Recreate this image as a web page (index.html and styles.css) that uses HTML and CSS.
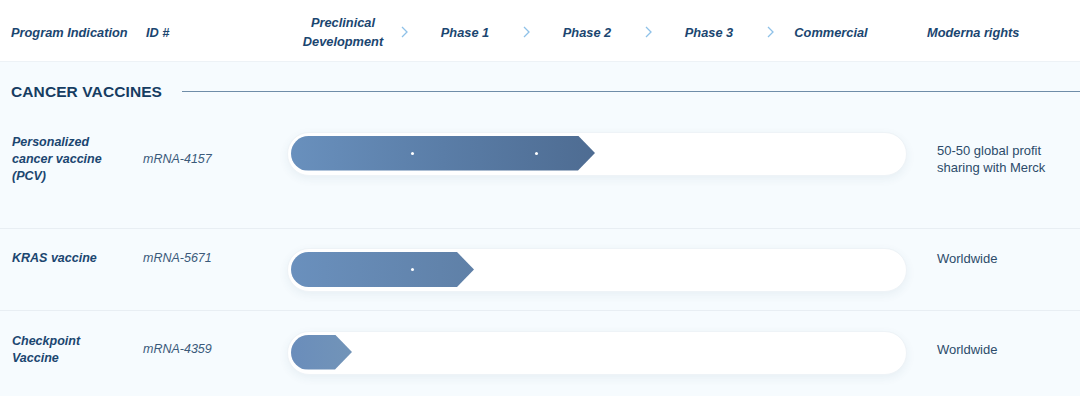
FILE: index.html
```html
<!DOCTYPE html>
<html lang="en">
<head>
<meta charset="utf-8">
<title>Pipeline</title>
<link rel="stylesheet" href="styles.css">
</head>
<body>
<div class="pipeline">
  <div class="head">
    <div class="h-name">Program Indication</div>
    <div class="h-id">ID #</div>
    <div class="h-stages">
      <div class="stage">Preclinical<br>Development</div>
      <div class="chev"><svg width="7" height="12" viewBox="0 0 7 12"><polyline points="1,1 6,6 1,11" fill="none" stroke="#8ec1e8" stroke-width="1.3"/></svg></div>
      <div class="stage">Phase 1</div>
      <div class="chev"><svg width="7" height="12" viewBox="0 0 7 12"><polyline points="1,1 6,6 1,11" fill="none" stroke="#8ec1e8" stroke-width="1.3"/></svg></div>
      <div class="stage">Phase 2</div>
      <div class="chev"><svg width="7" height="12" viewBox="0 0 7 12"><polyline points="1,1 6,6 1,11" fill="none" stroke="#8ec1e8" stroke-width="1.3"/></svg></div>
      <div class="stage">Phase 3</div>
      <div class="chev"><svg width="7" height="12" viewBox="0 0 7 12"><polyline points="1,1 6,6 1,11" fill="none" stroke="#8ec1e8" stroke-width="1.3"/></svg></div>
      <div class="stage">Commercial</div>
    </div>
    <div class="h-rights">Moderna rights</div>
  </div>

  <div class="body">
    <div class="section">
      <h2 class="section-title">CANCER VACCINES</h2>
      <div class="section-line"></div>
    </div>

    <div class="row">
      <div class="name">Personalized<br>cancer vaccine<br>(PCV)</div>
      <div class="id">mRNA-4157</div>
      <div class="track">
        <div class="bar bar-dark" style="width:304px">
          <span class="dot"></span><span class="dot"></span>
        </div>
      </div>
      <div class="rights">50-50 global profit<br>sharing with Merck</div>
    </div>

    <div class="row">
      <div class="name">KRAS vaccine</div>
      <div class="id">mRNA-5671</div>
      <div class="track">
        <div class="bar bar-mid" style="width:183px">
          <span class="dot"></span>
        </div>
      </div>
      <div class="rights">Worldwide</div>
    </div>

    <div class="row">
      <div class="name">Checkpoint<br>Vaccine</div>
      <div class="id">mRNA-4359</div>
      <div class="track">
        <div class="bar bar-light" style="width:61px"></div>
      </div>
      <div class="rights">Worldwide</div>
    </div>
  </div>
</div>
</body>
</html>
```

FILE: styles.css
```css
html, body {
  margin: 0;
  padding: 0;
}
body {
  width: 1080px;
  height: 396px;
  overflow: hidden;
  background: #f6fbfe;
  font-family: "Liberation Sans", Arial, sans-serif;
  color: #1b4670;
}
.pipeline {
  width: 1080px;
}
.head {
  box-sizing: border-box;
  display: flex;
  align-items: center;
  height: 62px;
  padding-top: 3px;
  background: #ffffff;
  border-bottom: 1px solid #edf2f6;
  padding-left: 11px;
  font-size: 12.8px;
  font-weight: bold;
  font-style: italic;
  line-height: 19px;
  color: #1b4670;
}
.h-name {
  width: 135px;
}
.h-id {
  width: 141px;
}
.h-stages {
  display: flex;
  align-items: center;
  width: 600px;
}
.stage {
  width: 112px;
  text-align: center;
}
.chev {
  width: 10px;
  display: flex;
  justify-content: center;
  align-items: center;
  height: 12px;
}
.chev svg {
  display: block;
}
.h-rights {
  margin-left: 40px;
}
.body {
  padding-top: 20px;
}
.section {
  display: flex;
  align-items: center;
  padding-left: 11px;
  height: 20px;
  margin-bottom: 10px;
}
.section-title {
  margin: 0;
  font-size: 15.5px;
  line-height: 20px;
  font-weight: bold;
  color: #163d62;
  letter-spacing: 0.1px;
}
.section-line {
  flex: 1;
  height: 1px;
  background: #6f8da8;
  margin-left: 20px;
  margin-top: -1px;
}
.row {
  display: flex;
  align-items: center;
  padding: 21.5px 0 43px 12px;
  border-bottom: 1px solid #e8eef3;
}
.name {
  width: 131px;
  font-size: 12.5px;
  line-height: 17px;
  font-weight: bold;
  font-style: italic;
  color: #1b4670;
}
.id {
  width: 145px;
  font-size: 12.5px;
  line-height: 17px;
  font-style: italic;
  color: #3a5a7a;
}
.track {
  align-self: flex-start;
  box-sizing: border-box;
  width: 620px;
  height: 44px;
  margin-left: -1px;
  margin-top: -2px;
  margin-bottom: -25px;
  padding: 3px 3px;
  background: #ffffff;
  border-radius: 22px;
  border: 1px solid #eef3f7;
  box-shadow: 0 3px 10px rgba(40, 80, 120, 0.07);
}
.bar {
  box-sizing: border-box;
  height: 35px;
  border-radius: 17.5px 0 0 17.5px;
  clip-path: polygon(0 0, calc(100% - 17px) 0, 100% 50%, calc(100% - 17px) 100%, 0 100%);
  display: flex;
  align-items: center;
  gap: 121px;
}
.bar-dark {
  background: linear-gradient(90deg, #6990bd 0%, #5a7da7 50%, #4e6c92 100%);
}
.bar-mid {
  background: linear-gradient(90deg, #6a90bd 0%, #5f80a7 100%);
}
.bar-light {
  background: linear-gradient(90deg, #6a8dbb 0%, #7294b8 100%);
}
.dot {
  width: 3px;
  height: 3px;
  border-radius: 50%;
  background: #ffffff;
  flex: none;
}
.dot:first-child {
  margin-left: 120px;
}
.rights {
  margin-left: 30px;
  font-size: 13px;
  line-height: 17px;
  color: #2c4b6a;
}
```
